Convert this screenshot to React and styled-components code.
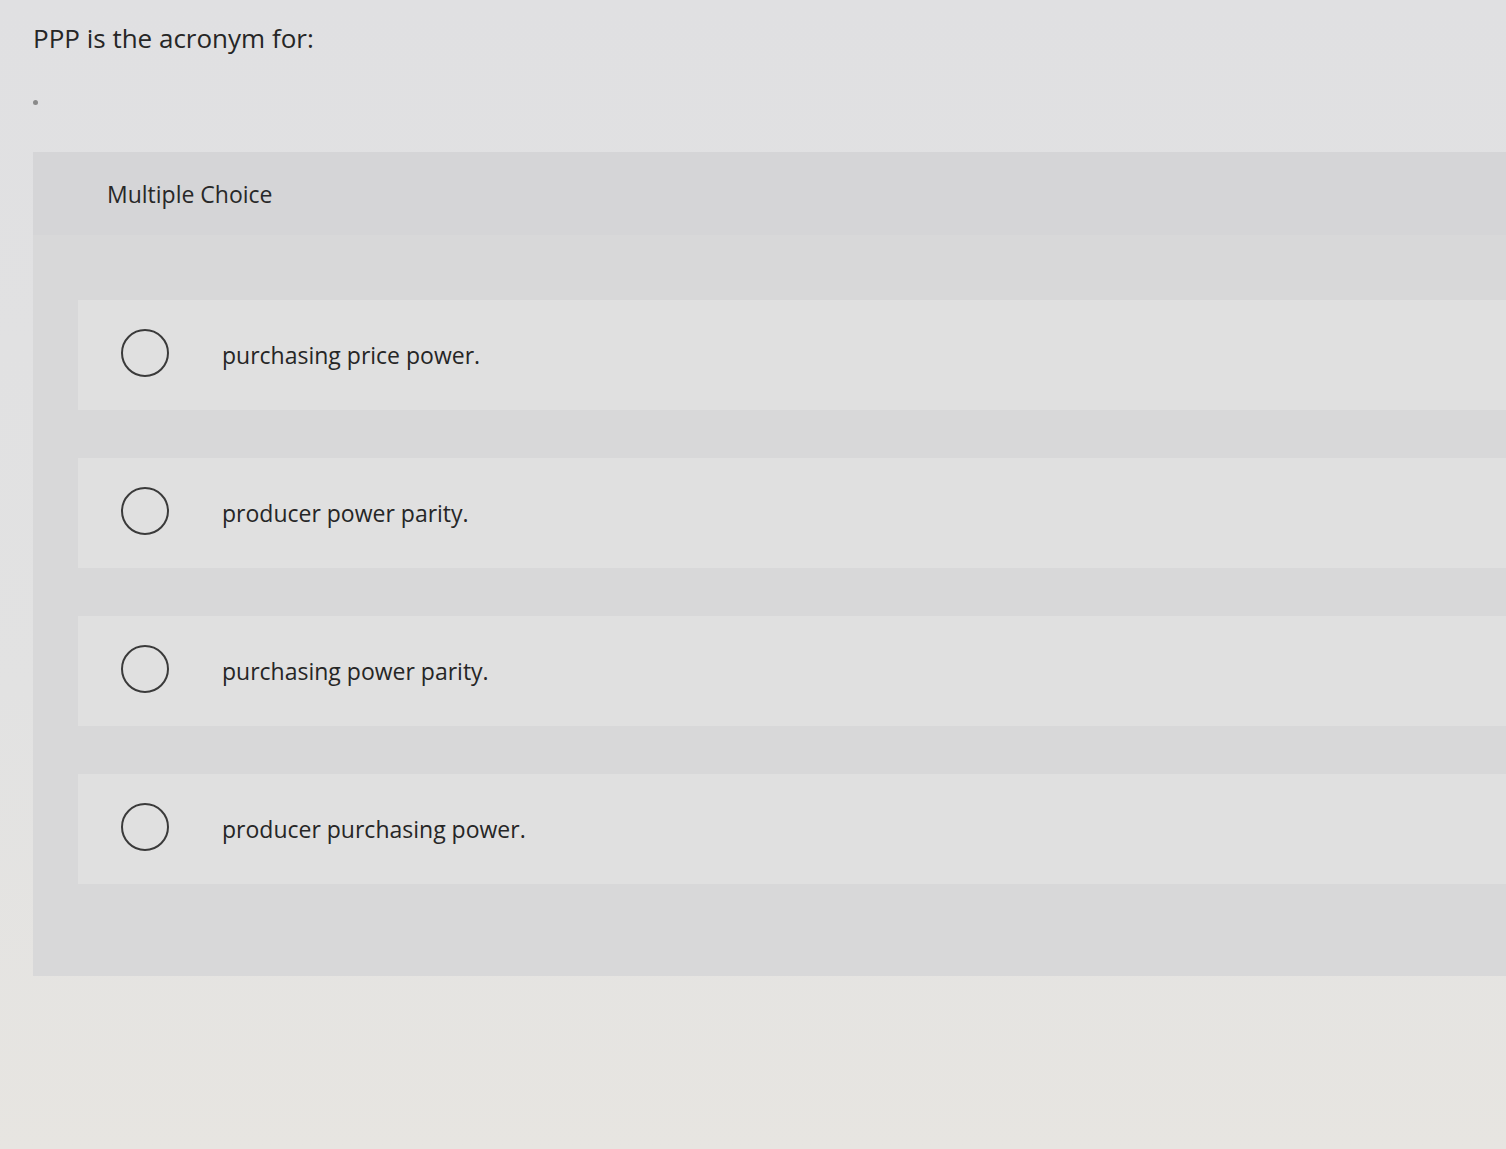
import styled, { createGlobalStyle } from "styled-components"

const GlobalStyle = createGlobalStyle`
  html, body {
    margin: 0;
    padding: 0;
  }
  body {
    background: linear-gradient(180deg, #e0e0e2 0%, #e2e2e2 60%, #e7e5e1 100%);
    font-family: "Open Sans", Lato, "Liberation Sans", sans-serif;
    color: #262626;
    overflow: hidden;
  }
`

const Page = styled.div`
  width: 1506px;
  height: 1149px;
  padding: 20px 0 0 33px;
  box-sizing: border-box;
`

const Question = styled.h1`
  margin: 0;
  font-size: 26px;
  font-weight: 400;
  line-height: 36px;
  color: #262626;
`

const Dot = styled.span`
  display: block;
  width: 5px;
  height: 5px;
  margin: 44px 0 0 0;
  border-radius: 50%;
  background: #8a8a8a;
`

const Panel = styled.section`
  margin-top: 47px;
  background: #d8d8d9;
  padding-bottom: 92px;
`

const PanelHeader = styled.div`
  height: 83px;
  display: flex;
  align-items: center;
  padding-left: 74px;
  background: #d5d5d7;
  font-size: 23px;
  color: #282828;
`

const Options = styled.div`
  display: flex;
  flex-direction: column;
  gap: 48px;
  padding: 65px 0 0 45px;
`

const Option = styled.label`
  height: 110px;
  display: flex;
  align-items: center;
  background: #e0e0e0;
  cursor: pointer;
`

const Radio = styled.span`
  width: 44px;
  height: 44px;
  margin: -5px 0 0 43px;
  border: 2px solid #3a3a3a;
  border-radius: 50%;
  flex-shrink: 0;
`

const OptionText = styled.span`
  margin-left: 53px;
  font-size: 23px;
  color: #262626;
`

const choices = [
  "purchasing price power.",
  "producer power parity.",
  "purchasing power parity.",
  "producer purchasing power.",
]

const App = () => {
  return (
    <Page>
      <GlobalStyle />
      <Question>PPP is the acronym for:</Question>
      <Dot />
      <Panel>
        <PanelHeader>Multiple Choice</PanelHeader>
        <Options>
          {choices.map((text) => (
            <Option key={text}>
              <Radio />
              <OptionText>{text}</OptionText>
            </Option>
          ))}
        </Options>
      </Panel>
    </Page>
  )
}

export default App
